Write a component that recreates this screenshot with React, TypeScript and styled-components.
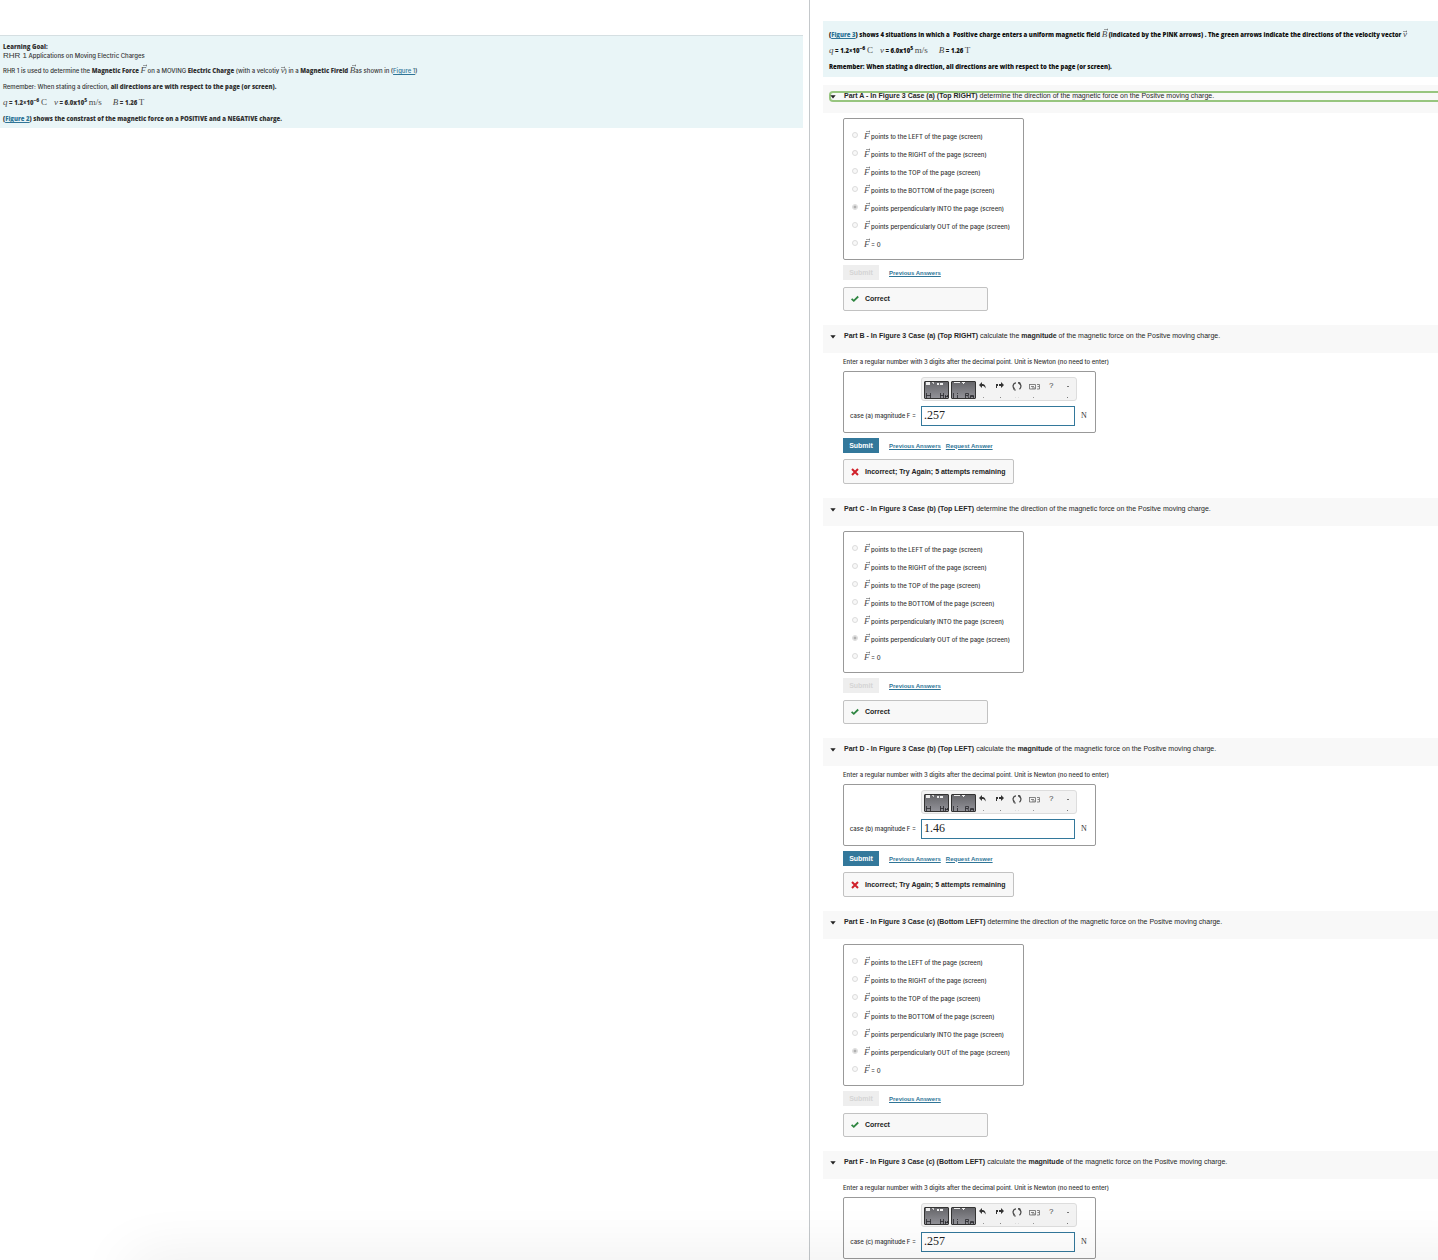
import React from "react";
import styled, { createGlobalStyle } from "styled-components";

const GlobalStyle = createGlobalStyle`
  * { box-sizing: border-box; }
  body {
    margin: 0;
    background: #fff;
    color: #333;
    font-family: Inter, "Liberation Sans", Arial, sans-serif;
    font-size: 6px;
    font-weight: 500;
    line-height: 10px;
  }
  p { margin: 0; }
`;

const Page = styled.div`
  display: grid;
  grid-template-columns: 809fr 629fr;
  height: 100vh;
  overflow: hidden;
`;

const LeftPane = styled.aside`
  padding: 35px 6px 0 0;
`;

const RightPane = styled.main`
  min-width: 0;
  overflow: hidden;
  border-left: 1px solid #c4c8cb;
  padding: 21px 0 0 13px;
`;

const Intro = styled.section`
  background: #e9f5f7;
  border-top: 1px solid #d5dfe2;
  padding: 6px 3px 1px;
`;

const IntroTitle = styled.div`
  margin-bottom: 3px;
`;

const Prompt = styled.section`
  background: #e9f5f7;
  color: #111;
  padding: 6px 6px 2px;
  white-space: nowrap;
`;

const Line = styled.p<{ $tight?: boolean }>`
  white-space: nowrap;
  height: ${(p) => (p.$tight ? 9 : 16)}px;
  line-height: ${(p) => (p.$tight ? 9 : 16)}px;
`;

const Strong = styled.b`
  font-family: "Open Sans", "Liberation Sans", Arial, sans-serif;
  font-weight: 800;
`;

const Big = styled.span`
  font-family: "Liberation Sans", Arial, sans-serif;
  font-size: 8px;
  font-weight: 400;
`;

const Link = styled.a`
  color: #2f7597;
  text-decoration: underline;
`;

const MathText = styled.span<{ $italic?: boolean }>`
  font-family: "Liberation Serif", "Times New Roman", serif;
  font-style: ${(p) => (p.$italic ? "italic" : "normal")};
  font-weight: normal;
  font-size: 9px;
  line-height: 1;
  color: #4a4a4a;
`;

const Sup = styled.sup`
  font-size: 5px;
  line-height: 1;
`;

const Gap = styled.span<{ $w: number }>`
  display: inline-block;
  width: ${(p) => p.$w}px;
`;

const VecBox = styled(MathText)`
  position: relative;
  display: inline-block;
`;

const VecArrow = styled.svg<{ $low: boolean }>`
  position: absolute;
  left: ${(p) => (p.$low ? 0 : 2)}px;
  top: ${(p) => (p.$low ? 0 : -2)}px;
  width: 5px;
  height: 3px;
`;

function Vec({ children }: { children: string }) {
  return (
    <VecBox $italic>
      {children}
      <VecArrow $low={children === "v"} viewBox="0 0 5 3" aria-hidden="true">
        <path d="M0 1.5H4M3 .7L4 1.500L3 2.300" fill="none" stroke="#666" strokeWidth=".6" />
      </VecArrow>
    </VecBox>
  );
}

function Values() {
  return (
    <>
      <MathText $italic>q</MathText> <Strong>= 1.2×10<Sup>−6</Sup></Strong> <MathText>C</MathText>
      <Gap $w={7} />
      <MathText $italic>v</MathText> <Strong>= 6.0x10<Sup>5</Sup></Strong> <MathText>m/s</MathText>
      <Gap $w={11} />
      <MathText $italic>B</MathText> <Strong>= 1.26</Strong> <MathText>T</MathText>
    </>
  );
}

const PartSection = styled.section`
  padding-bottom: 14px;
`;

const PartHeader = styled.header`
  height: 28px;
  background: #f8f8f8;
  padding: 6px 0 0 6px;
`;

const PartToggle = styled.button<{ $focused?: boolean }>`
  display: flex;
  align-items: flex-start;
  gap: 8px;
  width: calc(100% + 6px);
  height: 11px;
  padding: 0 0 0 1px;
  border: 0;
  border-radius: 4px;
  background: none;
  color: #262626;
  font: 7px/9px "Liberation Sans", Arial, sans-serif;
  text-align: left;
  white-space: nowrap;
  box-shadow: ${(p) => (p.$focused ? "inset 0 0 0 2px #97c57f" : "none")};
`;

const Caret = styled.svg`
  flex: none;
  width: 6px;
  height: 4px;
  margin-top: 4px;
`;

const PartBody = styled.div`
  padding-left: 20px;
`;

const ChoiceBox = styled.fieldset`
  width: 181px;
  margin: 5px 0;
  padding: 9px 8px 5px;
  border: 1px solid #999;
  border-radius: 2px;
`;

const Choice = styled.label`
  display: flex;
  align-items: center;
  gap: 6px;
  height: 18px;
  white-space: nowrap;
`;

const Radio = styled.input`
  appearance: none;
  flex: none;
  width: 6px;
  height: 6px;
  margin: 0 0 4px;
  border: 1px solid #dcdcdc;
  border-radius: 50%;
  background: #f8f8f8;
  &:checked {
    background: radial-gradient(circle, #b0b0b0 0 1px, #ececec 2px);
  }
`;

const Actions = styled.div`
  display: flex;
  align-items: center;
  height: 15px;
  font: bold 6px/10px "Liberation Sans", Arial, sans-serif;
`;

const Submit = styled.button`
  width: 36px;
  height: 15px;
  margin-right: 10px;
  padding: 0;
  border: 0;
  background: #33789b;
  color: #fff;
  font: bold 7px/14px "Liberation Sans", Arial, sans-serif;
  &:disabled {
    background: #eee;
    color: #d5d5d5;
  }
`;

const ActionLink = styled(Link)`
  margin-right: 5px;
`;

const Feedback = styled.div<{ $wide?: boolean }>`
  display: flex;
  align-items: center;
  gap: 6px;
  width: ${(p) => (p.$wide ? 171 : 145)}px;
  height: ${(p) => (p.$wide ? 25 : 24)}px;
  margin-top: ${(p) => (p.$wide ? 6 : 7)}px;
  padding-left: 7px;
  border: 1px solid #c2c2c2;
  border-radius: 2px;
  background: #f8f8f8;
  color: #222;
  font: bold 7px/10px "Liberation Sans", Arial, sans-serif;
  white-space: nowrap;
`;

const Mark = styled.svg`
  width: 8px;
  height: 8px;
`;

const Instruction = styled.p`
  height: 18px;
  line-height: 18px;
`;

const AnswerBox = styled.div`
  display: grid;
  grid-template-columns: 72px 155px auto;
  align-content: start;
  gap: 5px;
  width: 253px;
  height: 62px;
  margin-bottom: 5px;
  padding-top: 5px;
  border: 1px solid #999;
  border-radius: 2px;
`;

const Toolbar = styled.div`
  grid-column: 2 / 4;
  display: flex;
  align-items: flex-start;
  width: 156px;
  height: 24px;
  padding: 3px 2px;
  border: 1px solid #ddd;
  border-radius: 3px;
  background: #f3f3f3;
`;

const PaletteButton = styled.button`
  display: flex;
  flex: none;
  width: 25px;
  height: 18px;
  margin-right: 2px;
  padding: 0;
  border: 1px solid #333;
  border-radius: 1px;
  background: linear-gradient(#66666a, #929298);
`;

const ToolButton = styled.button`
  display: flex;
  flex: none;
  width: 17px;
  height: 17px;
  padding: 0;
  border: 0;
  background: none;
`;

const HelpButton = styled(ToolButton)`
  height: 9px;
  padding-left: 3px;
  color: #444;
  font: 8px/10px "Liberation Sans", Arial, sans-serif;
`;

const AnswerLabel = styled.label`
  grid-column: 1;
  justify-self: end;
  line-height: 20px;
  white-space: nowrap;
`;

const AnswerInput = styled.input`
  width: 154px;
  height: 20px;
  padding: 0 2px 2px;
  border: 1px solid #33789b;
  background: #fff;
  color: #222;
  font: 12px/16px "Liberation Serif", "Times New Roman", serif;
`;

const Unit = styled.span`
  font: 8px/20px "Liberation Serif", "Times New Roman", serif;
`;

const BottomShade = styled.div`
  position: fixed;
  left: 130px;
  right: -60px;
  bottom: -40px;
  height: 40px;
  box-shadow: 0 0 60px rgba(0, 0, 0, 0.09);
  pointer-events: none;
`;

const choices = [
  "points to the LEFT of the page (screen)",
  "points to the RIGHT of the page (screen)",
  "points to the TOP of the page (screen)",
  "points to the BOTTOM of the page (screen)",
  "points perpendicularly INTO the page (screen)",
  "points perpendicularly OUT of the page (screen)",
  "= 0",
];

function Header({ id, place, numeric }: { id: string; place: string; numeric?: boolean }) {
  return (
    <PartHeader>
      <PartToggle type="button" aria-expanded="true" $focused={id === "A"}>
        <Caret viewBox="0 0 6 4" aria-hidden="true">
          <path d="M.3 .3H5.7L3 3.5Z" fill="#222" />
        </Caret>
        <span>
          <b>Part {id} - In Figure 3 Case {place}</b>{" "}
          {numeric ? (
            <>calculate the <b>magnitude</b> of the magnetic force</>
          ) : (
            "determine the direction of the magnetic force"
          )}{" "}
          on the Positve moving charge.
        </span>
      </PartToggle>
    </PartHeader>
  );
}

function ChoicePart({ id, place, answer }: { id: string; place: string; answer: number }) {
  return (
    <PartSection>
      <Header id={id} place={place} />
      <PartBody>
        <ChoiceBox disabled>
          {choices.map((text, i) => (
            <Choice key={text}>
              <Radio type="radio" name={`part-${id}`} defaultChecked={i === answer} />
              <span><Vec>F</Vec> {text}</span>
            </Choice>
          ))}
        </ChoiceBox>
        <Actions>
          <Submit type="button" disabled>Submit</Submit>
          <ActionLink href="#previous">Previous Answers</ActionLink>
        </Actions>
        <Feedback>
          <Mark viewBox="0 0 8 8" aria-hidden="true">
            <path d="M.6 3.8L2.8 5.800L7.200 1.500" fill="none" stroke="#2e8540" strokeWidth="1.8" />
          </Mark>
          Correct
        </Feedback>
      </PartBody>
    </PartSection>
  );
}

function MathToolbar() {
  return (
    <Toolbar role="toolbar" aria-label="Math tools">
      <PaletteButton type="button" aria-label="Templates">
        <svg width="23" height="16" viewBox="0 0 23 16">
          <path d="M1 0H5V3H1ZM12 1H14V3H12ZM15 1H18V3H15Z" fill="#eee" />
          <path d="M7 .5H9M8.500 1V2" stroke="#ccc" />
          <path d="M1.500 11V16M5.500 11V16M1.500 13.500H5.500M15.500 11V16M18.500 11V16M15.500 13.500H18.500M20 14.500H23M20.500 13V16M22.500 13V15" fill="none" stroke="#29292d" strokeWidth=".8" />
        </svg>
      </PaletteButton>
      <PaletteButton type="button" aria-label="Symbols">
        <svg width="23" height="16" viewBox="0 0 23 16">
          <path d="M2 .5H8M10 .5H13M11.500 0V2" stroke="#eee" />
          <path d="M1.500 11V16M5.500 13V16M5.500 11V12M13.500 16V11.500H16.500V13.500H13.500M15.500 13.500L17 16M18.500 16V13.500H21.500V16M18.500 14.500H22" fill="none" stroke="#29292d" strokeWidth=".8" />
        </svg>
      </PaletteButton>
      <ToolButton type="button" aria-label="Undo">
        <svg width="17" height="19" viewBox="-1 -1 17 19">
          <path d="M0 3L3 0V2C5.500 2 7 4 6.500 6.500C5.500 4.500 5 4 3 4V6Z" fill="#333" />
          <path d="M4 15.500H5" stroke="#999" />
        </svg>
      </ToolButton>
      <ToolButton type="button" aria-label="Redo">
        <svg width="17" height="19" viewBox="0 -1 17 19">
          <path d="M9 3L6 0V2H4V4H6V6ZM1 2H3V4H2V6H1Z" fill="#333" />
          <path d="M5 15.500H6" stroke="#888" />
        </svg>
      </ToolButton>
      <ToolButton type="button" aria-label="Reset">
        <svg width="17" height="19" viewBox="0 -1 17 19">
          <path d="M4 .8C1 1 0 5 2.500 7.200M6 .8C9 1 10 5 7.500 7.200" fill="none" stroke="#444" strokeWidth="1.200" />
          <path d="M2 5.500V8H4M8 3V.5H6" fill="none" stroke="#444" strokeWidth=".8" />
          <path d="M3 15.500H4M6 15.500H7" stroke="#ddd" />
        </svg>
      </ToolButton>
      <ToolButton type="button" aria-label="Keyboard shortcuts">
        <svg width="17" height="19" viewBox="0 -1 17 19">
          <path d="M0 2.500H6.500V7H.5V2M2 4.500H5M3 6H6M8 2.500H10.500V7H8M8.500 4.500H10" fill="none" stroke="#777" strokeWidth=".9" />
          <path d="M4 15.500H5" stroke="#999" />
        </svg>
      </ToolButton>
      <HelpButton type="button" aria-label="Help">?</HelpButton>
      <ToolButton type="button" aria-label="More">
        <svg width="9" height="19" viewBox="0 -1 9 19">
          <path d="M4 4.500H6M4 15.500H5" stroke="#777" />
        </svg>
      </ToolButton>
    </Toolbar>
  );
}

type NumberPartProps = { id: string; place: string; name: string; value: string; graded?: boolean };

function NumberPart({ id, place, name, value, graded }: NumberPartProps) {
  return (
    <PartSection>
      <Header id={id} place={place} numeric />
      <PartBody>
        <Instruction>
          Enter a regular number with 3 digits after the decimal point. Unit is Newton (no need to enter)
        </Instruction>
        <AnswerBox>
          <MathToolbar />
          <AnswerLabel htmlFor={`answer-${id}`}>case ({name}) magnitude F =</AnswerLabel>
          <AnswerInput id={`answer-${id}`} defaultValue={value} />
          <Unit>N</Unit>
        </AnswerBox>
        {graded && (
          <>
            <Actions>
              <Submit type="button">Submit</Submit>
              <ActionLink href="#previous">Previous Answers</ActionLink>
              <ActionLink href="#request">Request Answer</ActionLink>
            </Actions>
            <Feedback $wide>
              <Mark viewBox="0 0 8 8" aria-hidden="true">
                <path d="M1 1L7 7M7 1L1 7" stroke="#d0202a" strokeWidth="2" />
              </Mark>
              Incorrect; Try Again; 5 attempts remaining
            </Feedback>
          </>
        )}
      </PartBody>
    </PartSection>
  );
}

const Parts = styled.div`
  padding-top: 8px;
`;

export default function App() {
  return (
    <>
      <GlobalStyle />
      <Page>
        <LeftPane>
          <Intro>
            <IntroTitle>
              <Line $tight><Strong>Learning Goal:</Strong></Line>
              <Line $tight><Big>RHR 1</Big> Applications on Moving Electric Charges</Line>
            </IntroTitle>
            <Line>
              RHR 1 is used to determine the <Strong>Magnetic Force</Strong> <Vec>F</Vec> on a MOVING{" "}
              <Strong>Electric Charge</Strong> (with a velcotiy <Vec>v</Vec>) in a <Strong>Magnetic Fireld</Strong>{" "}
              <Vec>B</Vec>as shown in (<Link href="#figure1">Figure 1</Link>)
            </Line>
            <Line>
              Remember: When stating a direction,{" "}
              <Strong>all directions are with respect to the page (or screen).</Strong>
            </Line>
            <Line><Values /></Line>
            <Line>
              <Strong>
                (<Link href="#figure2">Figure 2</Link>) shows the constrast of the magnetic force on a POSITIVE and a NEGATIVE charge.
              </Strong>
            </Line>
          </Intro>
        </LeftPane>
        <RightPane>
          <Prompt>
            <Line>
              <Strong>
                (<Link href="#figure3">Figure 3</Link>) shows 4 situations in which a&nbsp; Positive charge enters a uniform magnetic field{" "}
                <Vec>B</Vec> (indicated by the PINK arrows) . The green arrows indicate the directions of the velocity vector <Vec>v</Vec>
              </Strong>
            </Line>
            <Line><Values /></Line>
            <Line>
              <Strong>Remember: When stating a direction, all directions are with respect to the page (or screen).</Strong>
            </Line>
          </Prompt>
          <Parts>
            <ChoicePart id="A" place="(a) (Top RIGHT)" answer={4} />
            <NumberPart id="B" place="(a) (Top RIGHT)" name="a" value=".257" graded />
            <ChoicePart id="C" place="(b) (Top LEFT)" answer={5} />
            <NumberPart id="D" place="(b) (Top LEFT)" name="b" value="1.46" graded />
            <ChoicePart id="E" place="(c) (Bottom LEFT)" answer={5} />
            <NumberPart id="F" place="(c) (Bottom LEFT)" name="c" value=".257" />
          </Parts>
        </RightPane>
      </Page>
      <BottomShade />
    </>
  );
}
